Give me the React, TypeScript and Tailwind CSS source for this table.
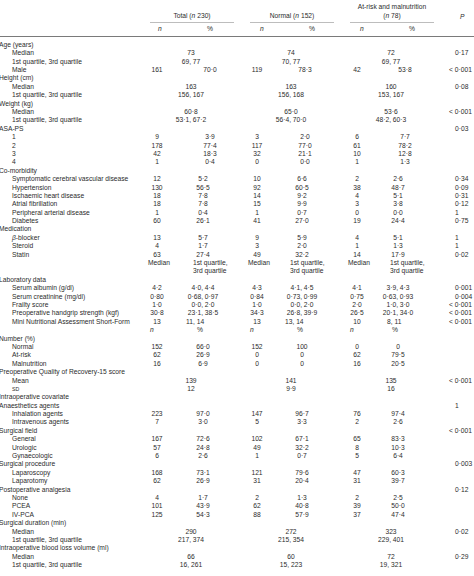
import React from 'react';

type Row =
  | { t: 'g'; label: React.ReactNode; p?: string }
  | { t: 'v'; label: React.ReactNode; v: string[]; p?: string; shift?: boolean; left?: boolean }
  | { t: 'm'; label: React.ReactNode; m: string[]; p?: string }
  | { t: 'mq' }
  | { t: 'np' };

const Q = '1st quartile, 3rd quartile';

const rows: Row[] = [
  { t: 'g', label: 'Age (years)' },
  { t: 'm', label: 'Median', m: ['73', '74', '72'], p: '0·17' },
  { t: 'm', label: Q, m: ['69, 77', '70, 77', '69, 77'] },
  { t: 'v', label: 'Male', v: ['161', '70·0', '119', '78·3', '42', '53·8'], p: '< 0·001', shift: true },
  { t: 'g', label: 'Height (cm)' },
  { t: 'm', label: 'Median', m: ['163', '163', '160'], p: '0·08' },
  { t: 'm', label: Q, m: ['156, 167', '156, 168', '153, 167'] },
  { t: 'g', label: 'Weight (kg)' },
  { t: 'm', label: 'Median', m: ['60·8', '65·0', '53·6'], p: '< 0·001' },
  { t: 'm', label: Q, m: ['53·1, 67·2', '56·4, 70·0', '48·2, 60·3'] },
  { t: 'g', label: 'ASA-PS', p: '0·03' },
  { t: 'v', label: '1', v: ['9', '3·9', '3', '2·0', '6', '7·7'], shift: true },
  { t: 'v', label: '2', v: ['178', '77·4', '117', '77·0', '61', '78·2'], shift: true },
  { t: 'v', label: '3', v: ['42', '18·3', '32', '21·1', '10', '12·8'], shift: true },
  { t: 'v', label: '4', v: ['1', '0·4', '0', '0·0', '1', '1·3'], shift: true },
  { t: 'g', label: 'Co-morbidity' },
  { t: 'v', label: 'Symptomatic cerebral vascular disease', v: ['12', '5·2', '10', '6·6', '2', '2·6'], p: '0·34' },
  { t: 'v', label: 'Hypertension', v: ['130', '56·5', '92', '60·5', '38', '48·7'], p: '0·09' },
  { t: 'v', label: 'Ischaemic heart disease', v: ['18', '7·8', '14', '9·2', '4', '5·1'], p: '0·31' },
  { t: 'v', label: 'Atrial fibrillation', v: ['18', '7·8', '15', '9·9', '3', '3·8'], p: '0·12' },
  { t: 'v', label: 'Peripheral arterial disease', v: ['1', '0·4', '1', '0·7', '0', '0·0'], p: '1' },
  { t: 'v', label: 'Diabetes', v: ['60', '26·1', '41', '27·0', '19', '24·4'], p: '0·75' },
  { t: 'g', label: 'Medication' },
  { t: 'v', label: <><i>β</i>-blocker</>, v: ['13', '5·7', '9', '5·9', '4', '5·1'], p: '1' },
  { t: 'v', label: 'Steroid', v: ['4', '1·7', '3', '2·0', '1', '1·3'], p: '1' },
  { t: 'v', label: 'Statin', v: ['63', '27·4', '49', '32·2', '14', '17·9'], p: '0·02' },
  { t: 'mq' },
  { t: 'g', label: 'Laboratory data' },
  { t: 'v', label: 'Serum albumin (g/dl)', v: ['4·2', '4·0, 4·4', '4·3', '4·1, 4·5', '4·1', '3·9, 4·3'], p: '0·001' },
  { t: 'v', label: 'Serum creatinine (mg/dl)', v: ['0·80', '0·68, 0·97', '0·84', '0·73, 0·99', '0·75', '0·63, 0·93'], p: '0·004' },
  { t: 'v', label: 'Frailty score', v: ['1·0', '0·0, 2·0', '1·0', '0·0, 2·0', '2·0', '1·0, 3·0'], p: '< 0·001' },
  { t: 'v', label: 'Preoperative handgrip strength (kgf)', v: ['30·8', '23·1, 38·5', '34·3', '26·8, 39·9', '26·5', '20·1, 34·0'], p: '< 0·001' },
  { t: 'v', label: 'Mini Nutritional Assessment Short-Form', v: ['13', '11, 14', '13', '13, 14', '10', '8, 11'], p: '< 0·001', left: true },
  { t: 'np' },
  { t: 'g', label: 'Number (%)' },
  { t: 'v', label: 'Normal', v: ['152', '66·0', '152', '100', '0', '0'] },
  { t: 'v', label: 'At-risk', v: ['62', '26·9', '0', '0', '62', '79·5'] },
  { t: 'v', label: 'Malnutrition', v: ['16', '6·9', '0', '0', '16', '20·5'] },
  { t: 'g', label: 'Preoperative Quality of Recovery-15 score' },
  { t: 'm', label: 'Mean', m: ['139', '141', '135'], p: '< 0·001' },
  { t: 'm', label: <span className="text-[5.2px]">SD</span>, m: ['12', '9·9', '16'] },
  { t: 'g', label: 'Intraoperative covariate' },
  { t: 'g', label: 'Anaesthetics agents', p: '1' },
  { t: 'v', label: 'Inhalation agents', v: ['223', '97·0', '147', '96·7', '76', '97·4'] },
  { t: 'v', label: 'Intravenous agents', v: ['7', '3·0', '5', '3·3', '2', '2·6'] },
  { t: 'g', label: 'Surgical field', p: '< 0·001' },
  { t: 'v', label: 'General', v: ['167', '72·6', '102', '67·1', '65', '83·3'] },
  { t: 'v', label: 'Urologic', v: ['57', '24·8', '49', '32·2', '8', '10·3'] },
  { t: 'v', label: 'Gynaecologic', v: ['6', '2·6', '1', '0·7', '5', '6·4'] },
  { t: 'g', label: 'Surgical procedure', p: '0·003' },
  { t: 'v', label: 'Laparoscopy', v: ['168', '73·1', '121', '79·6', '47', '60·3'] },
  { t: 'v', label: 'Laparotomy', v: ['62', '26·9', '31', '20·4', '31', '39·7'] },
  { t: 'g', label: 'Postoperative analgesia', p: '0·12' },
  { t: 'v', label: 'None', v: ['4', '1·7', '2', '1·3', '2', '2·5'] },
  { t: 'v', label: 'PCEA', v: ['101', '43·9', '62', '40·8', '39', '50·0'] },
  { t: 'v', label: 'IV-PCA', v: ['125', '54·3', '88', '57·9', '37', '47·4'] },
  { t: 'g', label: 'Surgical duration (min)' },
  { t: 'm', label: 'Median', m: ['290', '272', '323'], p: '0·02' },
  { t: 'm', label: Q, m: ['217, 374', '215, 354', '229, 401'] },
  { t: 'g', label: 'Intraoperative blood loss volume (ml)' },
  { t: 'm', label: 'Median', m: ['66', '60', '72'], p: '0·29' },
  { t: 'm', label: Q, m: ['16, 261', '15, 223', '19, 321'] },
];

// per-block offsets for the % column
const pctMl = ['ml-[19px]', 'ml-[18px]', 'ml-[14px]'];
const pctMlShift = ['ml-[26px]', 'ml-[21px]', 'ml-[21px]'];
const pctMlLeft = ['ml-[22px]', 'ml-[21px]', 'ml-[23px]'];
const blockMl = ['', 'ml-[16px]', 'ml-[16px]'];

function PCell({ p }: { p?: string }) {
  if (!p) return null;
  const lt = p.startsWith('< ');
  return (
    <div className="pl-[21px]">
      <span className={lt ? '-ml-[6px]' : ''}>{p}</span>
    </div>
  );
}

function TableRow({ r }: { r: Row }) {
  if (r.t === 'mq') {
    return (
      <div className="flex h-[16.8px]">
        <div className="w-[150px] shrink-0" />
        {[0, 1, 2].map(i => (
          <div key={i} className={`flex w-[84px] shrink-0 ${blockMl[i]}`}>
            <div className="flex w-[18px] justify-center">Median</div>
            <div className={i === 0 ? 'ml-[25px]' : 'ml-[22px]'}>
              1st quartile,
              <br />
              3rd quartile
            </div>
          </div>
        ))}
      </div>
    );
  }

  if (r.t === 'np') {
    return (
      <div className="flex h-[8.4px]">
        <div className="w-[150px] shrink-0" />
        {[0, 1, 2].map(i => (
          <div key={i} className={`flex w-[84px] shrink-0 ${blockMl[i]}`}>
            <div className="w-[4px]"><i>n</i></div>
            <div className={i === 2 ? 'ml-[38px]' : 'ml-[43px]'}>%</div>
          </div>
        ))}
      </div>
    );
  }

  return (
    <div className="flex h-[8.4px]">
      <div className={`w-[150px] shrink-0 ${r.t === 'g' ? '-ml-[1px]' : 'pl-[12px]'}`}>{r.label}</div>
      {r.t === 'g' && <div className="w-[1px] shrink-0" />}
      {r.t === 'g' && [0, 1, 2].map(i => <div key={i} className={`w-[84px] shrink-0 ${blockMl[i]}`} />)}
      {r.t === 'm' &&
        r.m.map((m, i) => (
          <div key={i} className={`flex w-[84px] shrink-0 justify-center pr-[2px] ${blockMl[i]}`}>
            {m}
          </div>
        ))}
      {r.t === 'v' &&
        [0, 1, 2].map(i => (
          <div key={i} className={`flex w-[84px] shrink-0 ${blockMl[i]}`}>
            <div className="flex w-[14px] justify-center">{r.v[i * 2]}</div>
            {r.left ? (
              <div className={pctMlLeft[i]}>{r.v[i * 2 + 1]}</div>
            ) : (
              <div className={`flex w-[40px] justify-center ${r.shift ? pctMlShift[i] : pctMl[i]}`}>
                {r.v[i * 2 + 1]}
              </div>
            )}
          </div>
        ))}
      <PCell p={r.p} />
    </div>
  );
}

export default function App() {
  return (
    <div className="h-[576px] w-[474px] overflow-hidden bg-white font-['Liberation_Sans',Arial,sans-serif] text-[6.7px] leading-[8.4px] whitespace-nowrap text-[#2b2b2b]">
      {/* header */}
      <div className="flex h-[23px] items-end">
        <div className="w-[150px] shrink-0" />
        <div className="w-[84px] shrink-0 border-b border-[#bdbdbd] pb-[2px] text-center">
          Total (<i>n</i> 230)
        </div>
        <div className="ml-[16px] w-[84px] shrink-0 border-b border-[#bdbdbd] pb-[2px] text-center">
          Normal (<i>n</i> 152)
        </div>
        <div className="ml-[16px] w-[84px] shrink-0 border-b border-[#bdbdbd] pb-[2px] text-center">
          At-risk and malnutrition
          <br />
          (<i>n</i> 78)
        </div>
        <div className="pb-[2px] pl-[26px]">
          <i>P</i>
        </div>
      </div>
      <div className="mt-[2px] flex h-[8.4px]">
        <div className="w-[150px] shrink-0" />
        {[0, 1, 2].map(i => (
          <div key={i} className={`flex w-[84px] shrink-0 ${blockMl[i]}`}>
            <div className={`w-[4px] ${i === 0 ? 'ml-[8px]' : 'ml-[10px]'}`}>
              <i>n</i>
            </div>
            <div className="ml-[45px]">%</div>
          </div>
        ))}
      </div>
      <div className="mt-[2.5px] h-px bg-[#7a7a7a]" />
      <div className="mt-[4px]">
        {rows.map((r, i) => (
          <TableRow key={i} r={r} />
        ))}
      </div>
    </div>
  );
}
